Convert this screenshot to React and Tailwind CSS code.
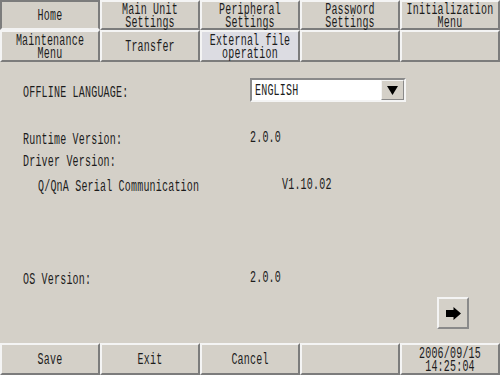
import React from 'react'

const font = { fontFamily: '"Liberation Mono", "DejaVu Sans Mono", monospace' }

function T({ children, className = '' }) {
  return (
    <span className={`inline-block [transform:translateY(2px)_scaleY(1.65)] text-[10px] tracking-[0.2px] leading-[7.6px] whitespace-pre ${className}`}>
      {children}
    </span>
  )
}

function Key({ lines, pressed, tint, className = '' }) {
  const edge = pressed
    ? 'border-t-2 border-l-2 border-r-2 border-t-[#7c7c7c] border-l-[#7c7c7c] border-r-[#7c7c7c] border-b-2 border-b-[#f2f2f2]'
    : 'border-t-2 border-l-2 border-t-[#f4f4f4] border-l-[#f4f4f4] border-r-2 border-b-2 border-r-[#7c7c7c] border-b-[#7c7c7c]'
  return (
    <div className={`flex items-center justify-center text-center ${tint ? 'bg-[#dcdce2]' : 'bg-[#d4d0c8]'} ${edge} ${className}`}>
      <T className="text-center">{lines.join('\n')}</T>
    </div>
  )
}

export default function App() {
  const top = [
    { lines: ['Home'], pressed: true },
    { lines: ['Main Unit', 'Settings'] },
    { lines: ['Peripheral', 'Settings'] },
    { lines: ['Password', 'Settings'] },
    { lines: ['Initialization', 'Menu'] },
  ]
  const second = [
    { lines: ['Maintenance', 'Menu'] },
    { lines: ['Transfer'] },
    { lines: ['External file', 'operation'], tint: true },
    { lines: [''] },
    { lines: [''] },
  ]
  const bottom = [
    { lines: ['Save'] },
    { lines: ['Exit'] },
    { lines: ['Cancel'] },
    { lines: [''] },
    { lines: ['2006/09/15', '14:25:04'] },
  ]

  return (
    <div className="w-[500px] h-[375px] bg-[#d4d0c8] text-[#1c1c1c] flex flex-col overflow-hidden" style={font}>
      <div className="grid grid-cols-5 h-[30px]">
        {top.map((k, i) => <Key key={i} {...k} />)}
      </div>
      <div className="grid grid-cols-5 h-[32px]">
        {second.map((k, i) => <Key key={i} {...k} />)}
      </div>

      <div className="flex-1 flex flex-col pt-[16px]">
        <div className="flex items-center h-[24px] pl-[23px]">
          <div className="w-[227px]"><T>OFFLINE LANGUAGE:</T></div>
          <div className="w-[156px] h-[24px] flex border-2 border-t-[#8a8a8a] border-l-[#8a8a8a] border-r-[#f4f4f4] border-b-[#f4f4f4]">
            <div className="flex-1 bg-white flex items-center pl-[3px]"><T>ENGLISH</T></div>
            <div className="w-[23px] bg-[#d4d0c8] flex items-center justify-center border-t border-l border-t-[#f4f4f4] border-l-[#f4f4f4] border-r border-b border-r-[#8a8a8a] border-b-[#8a8a8a]">
              <svg width="11" height="9" viewBox="0 0 11 9"><path d="M0 0H11L5.5 9Z" fill="#000" /></svg>
            </div>
          </div>
        </div>

        <div className="flex items-center h-[22px] mt-[24px] pl-[23px]">
          <div className="w-[227px]"><T>Runtime Version:</T></div>
          <T>2.0.0</T>
        </div>
        <div className="flex items-center h-[22px] mt-[2px] pl-[23px]">
          <T>Driver Version:</T>
        </div>
        <div className="flex items-center h-[22px] mt-[1px] pl-[38px]">
          <div className="w-[244px]"><T>Q/QnA Serial Communication</T></div>
          <T>V1.10.02</T>
        </div>

        <div className="flex items-center h-[22px] mt-[71px] pl-[23px]">
          <div className="w-[227px]"><T>OS Version:</T></div>
          <T>2.0.0</T>
        </div>

        <div className="self-end mr-[31px] mt-[9px] w-[32px] h-[32px] flex items-center justify-center border-2 border-t-[#f4f4f4] border-l-[#f4f4f4] border-r-[#8a8a8a] border-b-[#8a8a8a]">
          <svg width="15" height="13" viewBox="0 0 15 13"><path d="M0 3H7.5V0L15 6.5L7.5 13V10H0Z" fill="#000" /></svg>
        </div>
      </div>

      <div className="grid grid-cols-5 h-[32px]">
        {bottom.map((k, i) => <Key key={i} {...k} />)}
      </div>
    </div>
  )
}
